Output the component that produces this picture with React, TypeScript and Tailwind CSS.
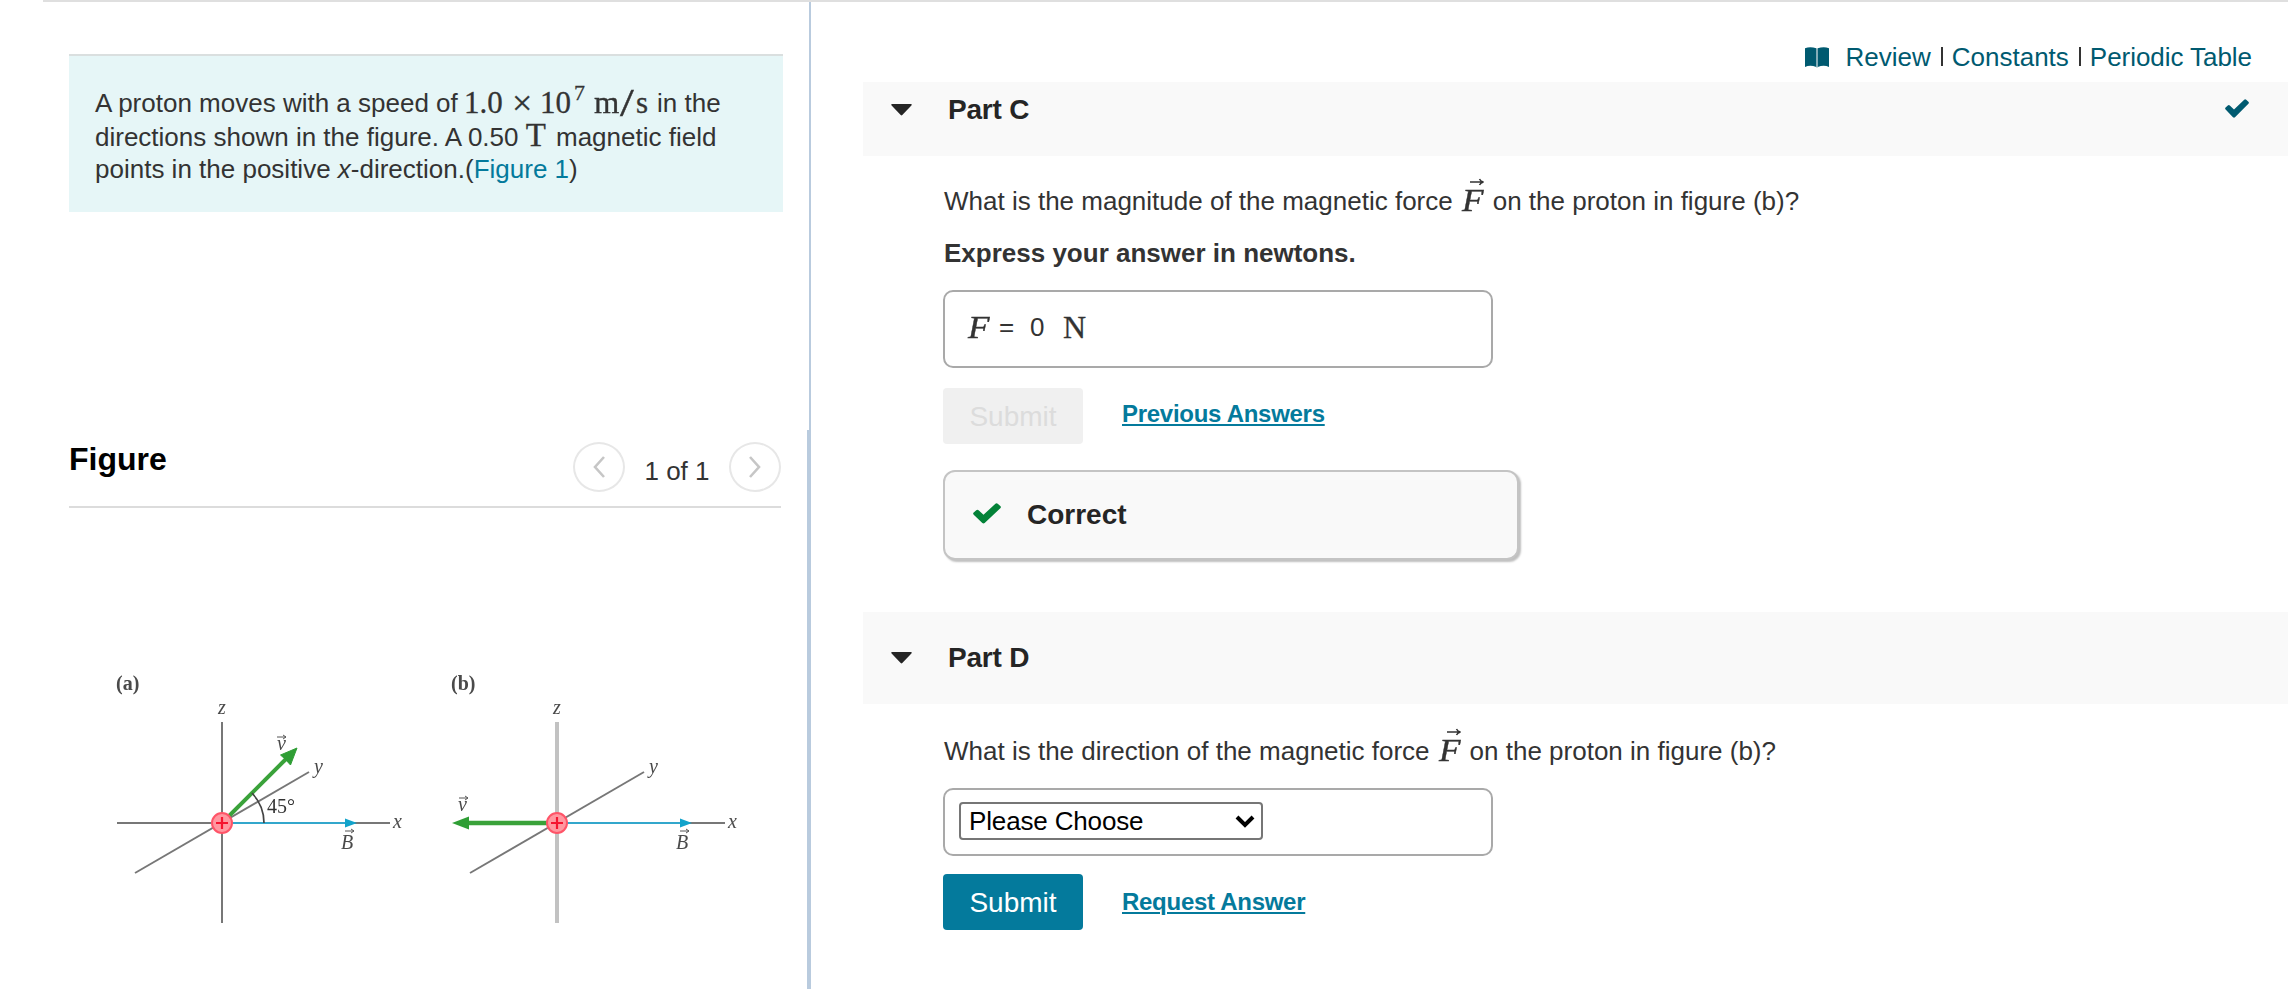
import type { ReactNode } from 'react';
import clsx from 'clsx';

const CheckMark = ({ className }: { className: string }) => (
    <svg viewBox="0 0 24 19" preserveAspectRatio="none" className={className}>
        <path
            d="M.6 10.6 Q-.4 9.6 .6 8.6 L2.8 6.5 Q3.8 5.6 4.8 6.5 L9 10.6 L19.2 .7 Q20.2 -.3 21.2 .7 L23.4 2.8 Q24.4 3.8 23.4 4.8 L10 18.2 Q9 19.1 8 18.2 Z"
            fill="currentColor"
        />
    </svg>
);

const BookIcon = () => (
    <svg viewBox="0 0 24 21" className="w-6 h-[21px]">
        <path d="M0 1.2 Q5 -.6 11.3 1.2 V20 Q5 17.6 0 20 Z M12.7 1.2 Q19 -.6 24 1.2 V20 Q19 17.6 12.7 20 Z" fill="#005a70" />
        <path d="M12 1.5 V20.5" stroke="#6fa0ad" strokeWidth="1.4" />
    </svg>
);

const VectorF = () => (
    <span className="relative top-px inline-block w-[22px] ml-[9px] mr-[9px] leading-[0] font-['Liberation_Serif',serif] italic text-[32px] [-webkit-text-stroke:0.4px_#333]">
        <span className="inline-block origin-left scale-x-110">F</span>
        <svg viewBox="0 0 14 8" className="absolute left-[8px] -top-[22px] w-[14px] h-2">
            <path d="M0 4 H12.5 M9.5 1 Q10.5 3.4 13.5 4 Q10.5 4.6 9.5 7" fill="none" stroke="#333" strokeWidth="1.5" />
        </svg>
    </span>
);

type PartProps = {
    title: string;
    done?: boolean;
    children: ReactNode;
};

function Part({ title, done = false, children }: PartProps) {
    return (
        <section>
            <header
                className={clsx('flex items-start bg-[#f9f9f9] pl-7 pr-[39px]', {
                    'h-[74px] pt-[10px]': done,
                    'h-[92px] pt-7': !done
                })}
            >
                <svg viewBox="0 0 21 12" className="w-[21px] h-3 mt-3">
                    <path d="M1 0 H20 Q21.3 .6 20.4 1.4 L11.3 11 Q10.5 11.8 9.7 11 L.6 1.4 Q-.3 .6 1 0 Z" fill="#252525" />
                </svg>
                <h2 className="ml-9 h-9 leading-[36px] text-[28px] font-bold text-[#252525] tracking-[-0.2px]">{title}</h2>
                {done && <CheckMark className="ml-auto mt-[7px] w-6 h-[19px] text-[#005a70]" />}
            </header>
            <div className="pl-20">{children}</div>
        </section>
    );
}

const Label = ({ x, y, children, bold = false }: { x: number; y: number; children: ReactNode; bold?: boolean }) => (
    <text x={x} y={y} fontSize="20" fontStyle={bold ? 'normal' : 'italic'} fontWeight={bold ? 700 : 400} fill="#4a4a4a">
        {children}
    </text>
);

const SmallArrow = ({ x, y }: { x: number; y: number }) => (
    <path d={`M${x} ${y} h9 m-3 -2 l3 2 l-3 2`} fill="none" stroke="#555" strokeWidth="1" />
);

const Proton = () => (
    <>
        <circle cx="222" cy="823" r="10" fill="#ff97a0" stroke="#ff5468" strokeWidth="2" />
        <path d="M216 823 h12 M222 817 v12" stroke="#f5142f" strokeWidth="2.2" />
    </>
);

// parts shared by both coordinate systems
const Axes = ({ zWidth, zColor }: { zWidth: number; zColor: string }) => (
    <>
        <path d="M222 722 V923" stroke={zColor} strokeWidth={zWidth} />
        <path d="M135 873 L309 772" stroke="#777" strokeWidth="1.9" />
        <path d="M345 823 H390" stroke="#777" strokeWidth="1.9" />
        <path d="M222 823 H347" stroke="#32a7cc" strokeWidth="2.2" />
        <path d="M345 818.5 L357 823 L345 827.5 Z" fill="#12a3cb" />
        <Label x={218} y={714}>z</Label>
        <Label x={314} y={773}>y</Label>
        <Label x={393} y={828}>x</Label>
        <Label x={341} y={849}>B</Label>
        <SmallArrow x={345} y={831} />
    </>
);

function ProtonFigure() {
    return (
        <svg
            viewBox="100 660 660 280"
            className="w-[660px] h-[280px] ml-[100px] mt-[152px] blur-[0.5px] font-['Liberation_Serif',serif]"
        >
            <Label x={116} y={690} bold>(a)</Label>
            <path d="M117 823 H222" stroke="#777" strokeWidth="1.9" />
            <Axes zWidth={2} zColor="#777" />
            <path d="M222 823 L288 757" stroke="#3aa23a" strokeWidth="4" />
            <path d="M297 748 L280.5 755 L285 759 L290.5 765 Z" fill="#2f9e35" stroke="#2f9e35" />
            <path d="M252 793 Q264 806 264 823" fill="none" stroke="#444" strokeWidth="1.7" />
            <text x="267" y="813" fontSize="20" fill="#333">45°</text>
            <Label x={277} y={750}>v</Label>
            <SmallArrow x={277} y={737} />
            <Proton />

            <Label x={451} y={690} bold>(b)</Label>
            <g transform="translate(335 0)">
                <Axes zWidth={4} zColor="#c2c2c2" />
                <path d="M133 823 H222" stroke="#3aa23a" strokeWidth="4.5" />
                <path d="M117 823 L134 816.5 V829.5 Z" fill="#2f9e35" />
                <Label x={123} y={811}>v</Label>
                <SmallArrow x={124} y={798} />
                <Proton />
            </g>
        </svg>
    );
}

const PagerButton = ({ direction }: { direction: 'prev' | 'next' }) => (
    <button className="w-[52px] h-[50px] rounded-[50%] border-2 border-[#e7e7e7] flex items-center justify-center">
        <svg viewBox="0 0 12 22" className={clsx('w-3 h-[22px]', direction === 'next' && 'rotate-180')}>
            <path d="M11 1 L2 11 L11 21" fill="none" stroke="#c6c6c6" strokeWidth="2.6" />
        </svg>
    </button>
);

// 1.0 × 10^7 m/s
const SpeedFormula = () => (
    <span className="flex font-['Liberation_Serif',serif] text-[31px] [-webkit-text-stroke:0.3px_#333]">
        <span className="w-[48px]">1.0</span>
        <span className="w-[28px] text-[36px]">×</span>
        <span className="w-[34px]">10</span>
        <span className="w-[20px] -mt-[10px] text-[22px]">7</span>
        <span className="w-[26px] origin-left scale-x-105">m</span>
        <span className="w-[16px]">
            <span className="inline-block origin-left scale-x-160 scale-y-130">/</span>
        </span>
        <span className="w-[21px]">s</span>
    </span>
);

export default function App() {
    return (
        <div className="flex w-[2288px] h-[989px] overflow-hidden bg-white font-['Liberation_Sans',Arial,sans-serif] text-[26px] text-[#333] whitespace-nowrap">
            <aside className="w-[811px] shrink-0 flex">
                <div className="w-[807px]">
                    <div className="ml-[43px] h-[2px] bg-[#dfdfdf]" />
                    <div className="ml-[69px] mt-[52px] w-[714px] h-[158px] border-t-2 border-[#dadfdf] bg-[#e6f6f7] pl-[26px] pt-[31px]">
                        <div className="h-[34px] leading-[32px] flex">
                            <span className="w-[369px]">A proton moves with a speed of</span>
                            <SpeedFormula />
                            <span>in the</span>
                        </div>
                        <div className="h-[32px] leading-[32px]">
                            directions shown in the figure. A 0.50{' '}
                            <span className="inline-block w-[23px] leading-[0] font-['Liberation_Serif',serif] text-[33px] [-webkit-text-stroke:0.3px_#333]">T</span>{' '}
                            magnetic field
                        </div>
                        <div className="h-[32px] leading-[32px]">
                            points in the positive <i>x</i>-direction.(<a className="text-[#047a9c]">Figure 1</a>)
                        </div>
                    </div>
                    <div className="ml-[69px] mt-[218px] w-[712px] h-[78px] border-b-2 border-[#dcdcdc] flex items-start">
                        <h1 className="mt-[9px] h-10 leading-10 text-[32px] font-bold text-black">Figure</h1>
                        <div className="ml-auto mt-[12px] flex">
                            <PagerButton direction="prev" />
                            <span className="w-[104px] pt-[13px] h-[50px] leading-[32px] text-center">1 of 1</span>
                            <PagerButton direction="next" />
                        </div>
                    </div>
                    <ProtonFigure />
                </div>
                <div className="w-1 flex flex-col items-end">
                    <div className="w-full h-[2px] bg-[#dfdfdf]" />
                    <div className="w-[2px] h-[428px] bg-[#b9cbde]" />
                    <div className="w-1 grow bg-[#b9cbde]" />
                </div>
            </aside>

            <main className="grow">
                <div className="h-[2px] bg-[#dfdfdf]" />
                <nav className="h-20 pt-[39px] pr-9 flex justify-end items-start leading-[32px] text-[#005a70]">
                    <span className="mt-[6px] mr-[17px]">
                        <BookIcon />
                    </span>
                    <a>Review</a>
                    <span className="ml-[10px] mr-[9px] mt-[6px] w-[2px] h-[19px] bg-[#333]" />
                    <a>Constants</a>
                    <span className="ml-[10px] mr-[9px] mt-[6px] w-[2px] h-[19px] bg-[#333]" />
                    <a className="tracking-[-0.05px]">Periodic Table</a>
                </nav>

                <div className="ml-[52px]">
                    <Part title="Part C" done>
                        <p className="mt-[29px] pl-px h-8 leading-8">
                            What is the magnitude of the magnetic force
                            <VectorF />
                            on the proton in figure (b)?
                        </p>
                        <p className="mt-5 pl-px h-8 leading-8 font-bold">Express your answer in newtons.</p>
                        <div className="mt-[21px] w-[550px] h-[78px] rounded-[10px] border-2 border-[#a9a9a9] pl-[23px] pt-[18px] flex leading-[34px]">
                            <span className="w-[31px] origin-left scale-x-110 font-['Liberation_Serif',serif] italic text-[32px] [-webkit-text-stroke:0.4px_#333]">F</span>
                            <span className="w-[31px]">=</span>
                            <span className="w-[33px]">0</span>
                            <span className="font-['Liberation_Serif',serif] text-[32px] [-webkit-text-stroke:0.3px_#333]">N</span>
                        </div>
                        <div className="mt-5 flex">
                            <button className="w-[140px] h-14 pt-px rounded-[4px] bg-[#f0f0f0] text-[28px] text-[#dcdcdc]">Submit</button>
                            <a className="ml-[39px] mt-[14px] h-[26px] leading-[24px] text-2xl font-bold tracking-[-0.28px] text-[#047a9c] underline decoration-2 underline-offset-[2px]">
                                Previous Answers
                            </a>
                        </div>
                        <div className="mt-[26px] w-[576px] h-[90px] rounded-[12px] border-2 border-[#c4c4c4] bg-[#f9f9f9] shadow-[2px_2px_2px_0px_rgba(0,0,0,0.25)] pl-7 flex">
                            <CheckMark className="mt-[31px] w-7 h-[21px] text-[#038238]" />
                            <strong className="ml-[26px] mt-[24px] h-9 leading-[37px] text-[28px] text-[#252525]">Correct</strong>
                        </div>
                    </Part>

                    <div className="mt-[52px]">
                        <Part title="Part D">
                            <p className="mt-[31px] pl-px h-8 leading-8">
                                What is the direction of the magnetic force
                                <VectorF />
                                on the proton in figure (b)?
                            </p>
                            <div className="mt-[21px] w-[550px] h-[68px] rounded-[10px] border-2 border-[#a9a9a9] pl-[14px] pt-3">
                                <div className="w-[304px] h-[38px] rounded-[4px] border-2 border-[#767676] pl-2 pr-[6px] flex items-center justify-between leading-[34px] text-black">
                                    <span className="tracking-[-0.15px]">Please Choose</span>
                                    <svg viewBox="0 0 20 13" className="w-5 h-[13px]">
                                        <path d="M2 2 L10 10 L18 2" fill="none" stroke="black" strokeWidth="4" />
                                    </svg>
                                </div>
                            </div>
                            <div className="mt-[18px] flex">
                                <button className="w-[140px] h-14 pt-px rounded-[4px] bg-[#047a9c] text-[28px] text-white">Submit</button>
                                <a className="ml-[39px] mt-4 h-[26px] leading-[24px] text-2xl font-bold tracking-[-0.28px] text-[#047a9c] underline decoration-2 underline-offset-[2px]">
                                    Request Answer
                                </a>
                            </div>
                        </Part>
                    </div>
                </div>
            </main>
        </div>
    );
}
